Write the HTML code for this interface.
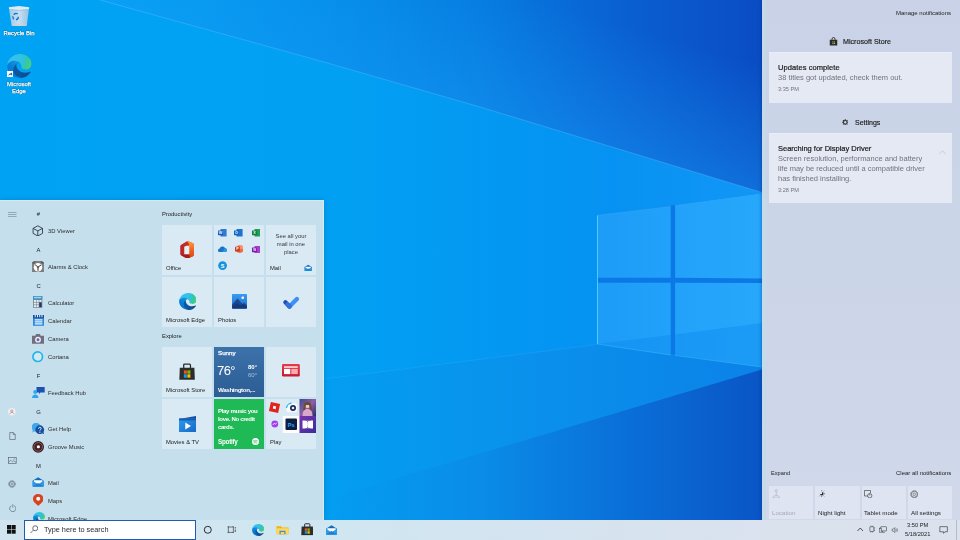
<!DOCTYPE html>
<html lang="en">
<head>
<meta charset="utf-8">
<title>Desktop</title>
<style>
html,body{margin:0;padding:0;}
body{width:960px;height:540px;overflow:hidden;position:relative;background:#0c8ff0;font-family:"Liberation Sans",sans-serif;color:#1b1b1b;-webkit-font-smoothing:antialiased;}
*{box-sizing:border-box;}
.abs{position:absolute;}
#wall{position:absolute;left:0;top:0;width:960px;height:540px;}
.t{position:absolute;white-space:nowrap;line-height:1;}
.t,.app,.hdr,.grp,.lbl,.dlabel{will-change:transform;}
/* desktop icons */
.dlabel{position:absolute;color:#fff;font-size:5.9px;text-align:center;line-height:7.2px;text-shadow:0 0.4px 1px rgba(0,0,0,.85),0 0 1.5px rgba(0,0,0,.55);-webkit-text-stroke:0.25px #fff;white-space:nowrap;}
/* start menu */
#start{position:absolute;left:0;top:200px;width:324.3px;height:320px;background:#c5dfec;box-shadow:0 0 5px rgba(0,70,150,0.32);border-right:0.6px solid #d4eaf5;}
#start .hdr{position:absolute;left:35.6px;width:5px;text-align:center;font-size:5.85px;color:#222;line-height:1;}
#start .app{position:absolute;left:48px;font-size:5.85px;color:#2e2e2e;line-height:1;white-space:nowrap;}
#start .grp{position:absolute;left:162px;font-size:5.85px;color:#222;line-height:1;}
.tile{position:absolute;width:50px;height:50px;background:#d9eaf4;overflow:hidden;}
.tile .lbl{position:absolute;left:4.2px;bottom:2.5px;font-size:5.85px;line-height:1;color:#1c1c1c;white-space:nowrap;}
/* action center */
#ac{position:absolute;left:762px;top:0;width:198px;height:520px;box-shadow:-1px 0 3px rgba(0,40,110,0.3);background:linear-gradient(#c9d2e6 0%,#cbd5e8 45%,#d0d8ea 100%);overflow:hidden;}
.card{position:absolute;left:6.9px;width:183px;background:#e5e9f4;border-top:0.6px solid #ebeefa;}
.qa{position:absolute;top:486.300px;width:44.600px;height:32.300px;background:#dee4f1;}
.qa .lbl{position:absolute;left:2.8px;bottom:2.6px;font-size:6.2px;line-height:1;white-space:nowrap;color:#1c1c1c;}
/* taskbar */
#tb{position:absolute;left:0;top:519.7px;width:960px;height:20.3px;background:linear-gradient(90deg,#d0e5f0 0%,#d0e6f0 36%,#d5e4f0 58%,#dae2ee 81%,#dbe2ee 100%);}
#search{position:absolute;left:24px;top:0.3px;width:171.6px;height:19.7px;background:#fff;border:0.8px solid #1f5cb0;}
</style>
</head>
<body>
<svg width="0" height="0" style="position:absolute">
<defs>
<linearGradient id="ea" x1="63" y1="180" x2="241" y2="180" gradientUnits="userSpaceOnUse"><stop offset="0" stop-color="#0c59a4"/><stop offset="1" stop-color="#114a8b"/></linearGradient>
<linearGradient id="ec" x1="157" y1="100" x2="46" y2="221" gradientUnits="userSpaceOnUse"><stop offset="0" stop-color="#1b9de2"/><stop offset="0.16" stop-color="#1595df"/><stop offset="0.67" stop-color="#0680d7"/><stop offset="1" stop-color="#0078d4"/></linearGradient>
<radialGradient id="ee" cx="26" cy="47" r="300" gradientUnits="userSpaceOnUse"><stop offset="0" stop-color="#35c1f1"/><stop offset="0.2" stop-color="#34c1ed"/><stop offset="0.45" stop-color="#2fc2df"/><stop offset="0.62" stop-color="#36c7a0"/><stop offset="0.8" stop-color="#50d668"/><stop offset="1" stop-color="#66eb6e"/></radialGradient>
<symbol id="edge" viewBox="2.8 14.9 243.2 239.1" preserveAspectRatio="none">
<path d="M231 190.500c-3.400 1.800-6.900 3.400-10.500 4.700-11.500 4.300-23.600 6.500-35.900 6.500-47.300 0-88.500-32.500-88.500-74.300 .1-11.400 6.400-21.900 16.400-27.300-42.800 1.800-53.800 46.400-53.800 72.500 0 73.900 68.100 81.400 82.800 81.400 7.900 0 19.800-2.300 27-4.600l1.300-.4c27.600-9.500 51.100-28.200 66.700-52.800 1.200-1.900 .5-4.300-1.300-5.500-1.300-.8-2.900-.9-4.200-.200z" fill="url(#ea)"/>
<path d="M105.700 241.400c-10.400-6.500-19.400-14.900-26.500-24.900-23.800-32.600-16.700-78.400 15.900-102.200 3.400-2.500 7-4.700 10.800-6.500 2.800-1.300 7.600-3.700 14-3.600 9.100 .1 17.700 4.400 23.100 11.700 3.600 4.900 5.600 10.700 5.700 16.800 0-.2 22-71.700-72.100-71.700-39.500 0-72.100 37.500-72.100 70.500-.2 17.400 3.600 34.700 10.900 50.400 24.700 52.700 85 78.600 140.200 60.200-18.900 6-39.500 3.300-56.300-7.200z" fill="url(#ec)"/>
<path d="M152.300 148.900c-.7 .9-3 2.300-3 5.100 0 2.400 1.500 4.600 4.300 6.500 13 9 37.500 7.800 37.600 7.800 9.600 0 19.100-2.600 27.400-7.500 17-9.900 27.400-28.100 27.400-47.700 .2-20.200-7.200-33.600-10.200-39.500-19.100-37.300-60.200-58.700-105-58.700-70 0-127 56.200-128 126.200 .4-33 33.200-59.600 72.200-59.600 3.200 0 21.200 .3 37.900 9.100 14.700 7.700 22.500 17.100 27.800 26.400 5.600 9.600 6.600 21.800 6.600 26.600s-2.500 12-7.100 18z" fill="url(#ee)"/>
</symbol>
<symbol id="bag" viewBox="0 0 24 24">
<path d="M7 7.500V2.800Q7 1.500 8.300 1.500h7.400Q17 1.500 17 2.800V7.500" fill="none" stroke="#2b2b2b" stroke-width="1.900"/>
<path d="M1.200 6.500h21.600l.7 17H.5z" fill="#2d2d2d"/>
<rect x="7.200" y="10.300" width="4.500" height="4.700" fill="#f25022"/><rect x="12.400" y="10.300" width="4.500" height="4.700" fill="#7fba00"/><rect x="7.200" y="15.800" width="4.500" height="4.700" fill="#00a4ef"/><rect x="12.400" y="15.800" width="4.500" height="4.700" fill="#ffb900"/>
</symbol>
<symbol id="mail" viewBox="0 0 24 24">
<path d="M1 9.500 12 2.500 23 9.500V21H1z" fill="#0f6cbd"/>
<path d="M3.500 8.500h17v8h-17z" fill="#fff"/>
<path d="M1 9.500 12 16.500 23 9.500V21H1z" fill="#2b9ae8"/>
<path d="M1 21 12 13.800 23 21z" fill="#1a82d6"/>
</symbol>
</defs>
</svg>
<!--WALL-->
<svg id="wall" viewBox="0 0 960 540">
<defs>
<linearGradient id="g1" x1="0" y1="0" x2="762" y2="0" gradientUnits="userSpaceOnUse"><stop offset="0" stop-color="#00a3f3"/><stop offset="0.45" stop-color="#02a0f3"/><stop offset="0.72" stop-color="#0495f2"/><stop offset="0.8" stop-color="#0692f2"/><stop offset="1" stop-color="#1296f6"/></linearGradient>
<linearGradient id="g2" x1="100" y1="0" x2="762" y2="0" gradientUnits="userSpaceOnUse"><stop offset="0" stop-color="#00a3f3"/><stop offset="0.34" stop-color="#038de9"/><stop offset="0.57" stop-color="#067ce0"/><stop offset="0.79" stop-color="#0a60d1"/><stop offset="1" stop-color="#0a4cc3"/></linearGradient>
<linearGradient id="g2b" x1="480" y1="107" x2="513" y2="-8" gradientUnits="userSpaceOnUse"><stop offset="0" stop-color="#189cf8" stop-opacity="0.4"/><stop offset="1" stop-color="#189cf8" stop-opacity="0"/></linearGradient>
<linearGradient id="g3" x1="324" y1="0" x2="762" y2="0" gradientUnits="userSpaceOnUse"><stop offset="0" stop-color="#039ef1"/><stop offset="0.5" stop-color="#0a90ec"/><stop offset="1" stop-color="#0b82e8"/></linearGradient>
<linearGradient id="g4" x1="324" y1="0" x2="762" y2="0" gradientUnits="userSpaceOnUse"><stop offset="0" stop-color="#039ef1"/><stop offset="0.36" stop-color="#0a8ce8"/><stop offset="0.68" stop-color="#0a70d9"/><stop offset="1" stop-color="#0a55c6"/></linearGradient>
<linearGradient id="gp" x1="596" y1="0" x2="762" y2="0" gradientUnits="userSpaceOnUse"><stop offset="0" stop-color="#1d9cf8"/><stop offset="1" stop-color="#27a8fb"/></linearGradient>
</defs>
<rect width="960" height="540" fill="url(#g1)"/>
<polygon points="100,0 324,62 480,107 762,192.5 762,0" fill="url(#g2)"/>
<polygon points="100,0 324,62 480,107 762,192.5 762,0" fill="url(#g2b)"/>
<polyline points="100,0 324,62 480,107 762,192.5" stroke="#5cc0ff" stroke-opacity="0.5" stroke-width="0.8" fill="none"/>
<polygon points="324,379 597,344.500 762,367.500 762,540 324,540" fill="url(#g3)"/>
<polyline points="324,379 597,344.500" stroke="#3cb4ff" stroke-opacity="0.35" stroke-width="0.8" fill="none"/>
<polygon points="324,500 762,369.500 762,540 324,540" fill="url(#g4)"/>
<polygon points="597.300,215.500 762,193.300 762,367 597.300,344" fill="#0b78e6"/>
<g fill="url(#gp)">
<polygon points="597.300,215.500 670.700,206.200 670.700,277.800 597.300,277.800"/>
<polygon points="675.100,204.900 762,193.300 762,278.500 675.100,277.800"/>
<polygon points="597.300,282.700 670.700,282.700 670.700,355 597.300,344"/>
<polygon points="675.100,282.700 762,283 762,367 675.100,355.500"/>
</g>
<g fill="#0a84ee" fill-opacity="0.35">
<polygon points="597.300,344 670.700,335 670.700,355"/>
<polygon points="675.100,334.500 762,323 762,367 675.100,355.500"/>
</g>
<polyline points="597.500,215.500 597.500,344" stroke="#4fd2ff" stroke-width="0.9" fill="none"/>
<polyline points="597.300,344 670.700,355 M675.100,355.500" stroke="#4cc4ff" stroke-opacity="0.55" stroke-width="0.7" fill="none"/>
<line x1="675.100" y1="355.500" x2="762" y2="367" stroke="#4cc4ff" stroke-opacity="0.45" stroke-width="0.7"/>
<polyline points="597.300,215.500 670.700,206.200 M675.100,204.900" stroke="#46b8ff" stroke-opacity="0.6" stroke-width="0.6" fill="none"/>
</svg>
<!--/WALL-->

<!--DESK-->
<svg class="abs" style="left:8px;top:4.500px" width="22" height="22.500" viewBox="0 0 44 45"><defs><linearGradient id="rb1" x1="0" y1="0" x2="1" y2="0"><stop offset="0" stop-color="#a9cde8"/><stop offset="0.5" stop-color="#d4e6f2"/><stop offset="1" stop-color="#9fc4e0"/></linearGradient></defs><path d="M2 7 42 7 37.500 42 7.500 42z" fill="url(#rb1)" opacity="0.930"/><path d="M1.500 4.500 22 2 42.500 4.500 42 8 22 10 2 8z" fill="#e4eef5" opacity="0.950"/><path d="M2 8 22 10 42 8 41.600 10 22 12 2.300 10z" fill="#9fbdd6" opacity="0.800"/><path d="M24 10v32" stroke="#c6d9e8" stroke-width="1" opacity="0.700"/><g fill="none" stroke="#1c6ec8" stroke-width="2.600"><path d="M11.500 19.500a5.500 5.500 0 0 1 8-1.500"/><path d="M20.500 23.500a5.500 5.500 0 0 1-4.500 6"/><path d="M12 28.500a5.500 5.500 0 0 1-2-6"/></g><path d="M9 42 36 42 37 38 8.500 38z" fill="#e8c8b8" opacity="0.450"/></svg>
<div class="dlabel" id="dl1" style="left:0;top:29.600px;width:38px;">Recycle Bin</div>
<svg class="abs" style="left:7.100px;top:53.800px" width="24.500" height="24"><use href="#edge"/></svg>
<svg class="abs" style="left:7.300px;top:71.300px" width="6" height="6" viewBox="0 0 12 12"><rect width="12" height="12" fill="#fff"/><path d="M3 10c0-4 2-5.500 5-5.500V2.500l3 3.500-3 3.500v-2C5.500 7.500 4 8 3 10z" fill="#1b5fc0"/></svg>
<div class="dlabel" id="dl2" style="left:0;top:80.500px;width:38px;">Microsoft<br>Edge</div>
<!--/DESK-->

<!--START-->
<div id="start">
<div class="abs" style="left:0;top:0;width:324px;height:0.600px;background:#d6e9f3;"></div>
<div class="hdr" id="r1" style="top:12.00px;">#</div>
<div class="app" id="r2" style="top:29.00px;">3D Viewer</div>
<div class="hdr" id="r3" style="top:48.00px;">A</div>
<div class="app" id="r4" style="top:65.00px;">Alarms &amp; Clock</div>
<div class="hdr" id="r5" style="top:84.00px;">C</div>
<div class="app" id="r6" style="top:101.00px;">Calculator</div>
<div class="app" id="r7" style="top:119.00px;">Calendar</div>
<div class="app" id="r8" style="top:137.00px;">Camera</div>
<div class="app" id="r9" style="top:155.00px;">Cortana</div>
<div class="hdr" id="r10" style="top:174.00px;">F</div>
<div class="app" id="r11" style="top:191.00px;">Feedback Hub</div>
<div class="hdr" id="r12" style="top:210.00px;">G</div>
<div class="app" id="r13" style="top:227.00px;">Get Help</div>
<div class="app" id="r14" style="top:245.00px;">Groove Music</div>
<div class="hdr" id="r15" style="top:264.00px;">M</div>
<div class="app" id="r16" style="top:281.00px;">Mail</div>
<div class="app" id="r17" style="top:299.00px;">Maps</div>
<div class="app" id="r18" style="top:317.00px;">Microsoft Edge</div>

<!-- left rail -->
<svg class="abs" style="left:8px;top:12px" width="8.500" height="5" viewBox="0 0 17 10"><path d="M0 1h17M0 5h17M0 9h17" stroke="#6b7c88" stroke-width="1.100"/></svg>
<svg class="abs" style="left:8.400px;top:208px" width="7.600" height="7.600" viewBox="0 0 16 16"><circle cx="8" cy="8" r="8" fill="#f3eeee"/><circle cx="8" cy="6.200" r="2.400" fill="none" stroke="#8a6f78" stroke-width="1.100"/><path d="M3.600 13c.5-2.600 2.300-3.800 4.400-3.800s3.900 1.200 4.400 3.800" fill="none" stroke="#8a6f78" stroke-width="1.100"/></svg>
<svg class="abs" style="left:8.700px;top:232px" width="7" height="8" viewBox="0 0 14 16"><path d="M1.500 1h7l4 4v10h-11z" fill="none" stroke="#4c5a64" stroke-width="1.200"/><path d="M8.500 1v4h4" fill="none" stroke="#4c5a64" stroke-width="1.200"/></svg>
<svg class="abs" style="left:8.200px;top:256.500px" width="8.600" height="7" viewBox="0 0 17 14"><rect x="0.700" y="0.700" width="15.600" height="12" fill="none" stroke="#4c5a64" stroke-width="1.200"/><path d="M1 10.500 5.500 6.500 9 9.500 11.500 7.500 16 11" fill="none" stroke="#4c5a64" stroke-width="1.100"/><circle cx="12" cy="4" r="1" fill="#4c5a64"/></svg>
<svg class="abs" style="left:8.300px;top:280px" width="8" height="8" viewBox="0 0 20 20"><circle cx="10" cy="10" r="8.200" fill="none" stroke="#4c5a64" stroke-width="1.700" stroke-dasharray="3.600 1.550"/><circle cx="10" cy="10" r="6.600" fill="none" stroke="#4c5a64" stroke-width="1.300"/><circle cx="10" cy="10" r="2.800" fill="none" stroke="#4c5a64" stroke-width="1.300"/></svg>
<svg class="abs" style="left:8.600px;top:304.200px" width="7.600" height="8" viewBox="0 0 15 16"><path d="M4.800 3.300a6.300 6.300 0 1 0 5.400 0" fill="none" stroke="#4c5a64" stroke-width="1.200"/><path d="M7.500 0.500v7" stroke="#4c5a64" stroke-width="1.200"/></svg>

<!-- app icons -->
<svg class="abs" style="left:32px;top:24.500px" width="11.600" height="11.800" viewBox="0 0 24 24"><path d="M12 1.500 21.800 6.800v10.400L12 22.500 2.200 17.200V6.800z M2.200 6.800 12 12l9.800-5.200M12 12v10.500" fill="none" stroke="#1f2d3a" stroke-width="1.700" stroke-linejoin="round"/></svg>
<svg class="abs" style="left:32px;top:60.800px" width="12" height="11.400" viewBox="0 0 24 23"><path d="M0 3 5 0h14l5 3v20H0z" fill="#7d7d7d"/><path d="M0 3 5 0 7 2.500 2 6z M24 3 19 0 17 2.500 22 6z" fill="#5e5e5e"/><circle cx="12" cy="12.500" r="8.600" fill="#fbfbfb"/><path d="M12 12.500 7 8M12 12.500 17.500 8.500M12 12.500V19" stroke="#222" stroke-width="1.900" fill="none" stroke-linecap="round"/></svg>
<svg class="abs" style="left:33.300px;top:96.300px" width="9.300" height="11.800" viewBox="0 0 18.600 23.600"><rect width="18.600" height="23.600" fill="#74838e"/><rect width="18.600" height="6.500" fill="#3595cf"/><rect x="2" y="1.600" width="14.600" height="3" fill="#9ad4f0"/><g fill="#e6edf2"><rect x="1.600" y="8" width="4.400" height="3.800"/><rect x="7.100" y="8" width="4.400" height="3.800"/><rect x="12.600" y="8" width="4.400" height="3.800"/><rect x="1.600" y="13.200" width="4.400" height="3.800"/><rect x="7.100" y="13.200" width="4.400" height="3.800"/><rect x="1.600" y="18.400" width="4.400" height="3.800"/><rect x="7.100" y="18.400" width="4.400" height="3.800"/></g><rect x="12.600" y="13.200" width="4.400" height="9" fill="#1d3566"/></svg>
<svg class="abs" style="left:32.500px;top:115px" width="11.200" height="10.800" viewBox="0 0 22.400 21.600"><rect width="22.400" height="21.600" fill="#2a8be0"/><rect width="22.400" height="6.500" fill="#164fa0"/><g fill="#fff"><rect x="3.500" y="0" width="1.800" height="4.500"/><rect x="8" y="0" width="1.800" height="4.500"/><rect x="12.600" y="0" width="1.800" height="4.500"/><rect x="17.100" y="0" width="1.800" height="4.500"/><rect x="3.600" y="8.600" width="15.200" height="2.300"/><rect x="3.600" y="12.600" width="15.200" height="2.300"/><rect x="3.600" y="16.600" width="15.200" height="2.300"/></g></svg>
<svg class="abs" style="left:32px;top:134px" width="12" height="9.800" viewBox="0 0 24 19.600"><path d="M0 3.600h6.500L8.500 0h7l2 3.600H24v16H0z" fill="#6f707c"/><circle cx="12" cy="11.300" r="5.800" fill="#f1eef8"/><circle cx="12" cy="11.300" r="3" fill="#6e62c4"/></svg>
<svg class="abs" style="left:32.300px;top:151.300px" width="11.400" height="11.400" viewBox="0 0 22.800 22.800"><circle cx="11.400" cy="11.400" r="9.600" fill="#d3e9f4" stroke="#22b5ea" stroke-width="3.400"/></svg>
<svg class="abs" style="left:32px;top:186.700px" width="12.700" height="11.400" viewBox="0 0 25.400 22.800"><path d="M9 0h16.400v11H17l-3 3v-3H9z" fill="#1d52b0"/><circle cx="6.500" cy="9.800" r="3.900" fill="#2aa6f4"/><path d="M0 22.800c0-5.500 2.800-8 6.500-8s6.500 2.500 6.500 8z" fill="#2aa6f4"/></svg>
<svg class="abs" style="left:32px;top:222.500px" width="12.500" height="11.600" viewBox="0 0 25 23.200"><path d="M9 0a8.500 8.500 0 0 1 8.500 8.500A8.500 8.500 0 0 1 9 17H3l-3 2.500 1.800-5A8.500 8.500 0 0 1 9 0z" fill="#3fa6ee"/><circle cx="15.500" cy="13.500" r="8.800" fill="#134f9e"/><path d="M20 20l4.500 3-1.500-5z" fill="#134f9e"/><path d="M13 11.300c0-1.700 1.200-2.700 2.700-2.700s2.600 1 2.600 2.300c0 2-2.500 2.200-2.500 4.300" fill="none" stroke="#fff" stroke-width="1.800"/><circle cx="15.800" cy="18.300" r="1.200" fill="#fff"/></svg>
<svg class="abs" style="left:32px;top:240.800px" width="12.400" height="11.800" viewBox="0 0 24.800 23.600"><circle cx="12.400" cy="11.800" r="11.600" fill="#2e2226"/><circle cx="12.400" cy="11.800" r="8.600" fill="none" stroke="#c65a58" stroke-width="1.700"/><circle cx="12.400" cy="11.800" r="5.500" fill="#4a2a30"/><circle cx="12.800" cy="11.600" r="3.100" fill="#fff"/></svg>
<svg class="abs" style="left:32px;top:276.400px" width="12.300" height="12"><use href="#mail"/></svg>
<svg class="abs" style="left:32.900px;top:294.300px" width="10.500" height="11.800" viewBox="0 0 21 23.600"><path d="M10.500 0C16 0 21 3.800 21 9.800c0 5.700-6 9.700-10.500 13.800C6 19.500 0 15.500 0 9.800 0 3.800 5 0 10.500 0z" fill="#d9421f"/><circle cx="10.500" cy="9.500" r="4" fill="#fff"/></svg>
<svg class="abs" style="left:32.500px;top:312.200px" width="12" height="11.800"><use href="#edge"/></svg>
<div class="grp" id="gp1" style="top:12px;">Productivity</div>
<div class="grp" id="gp2" style="top:134px;">Explore</div>
<div class="tile" style="left:162px;top:24.5px;"><svg class="abs" style="left:17.900px;top:16px" width="14" height="17.600" viewBox="0 0 28 35"><defs><linearGradient id="of1" x1="0" y1="0" x2="0" y2="1"><stop offset="0" stop-color="#ffa040"/><stop offset="0.5" stop-color="#f4621c"/><stop offset="1" stop-color="#e0400f"/></linearGradient><linearGradient id="of2" x1="0" y1="0" x2="1" y2="0"><stop offset="0" stop-color="#b8232a"/><stop offset="1" stop-color="#d43a1a"/></linearGradient></defs><path d="M16.500 0.500 26 4.500Q27.500 5.200 27.500 7V28Q27.500 30 26 30.600L16 34.500Q14 35.200 12 34L2 28.500Q0.500 27.600 0.500 26V10.500Q0.500 8.500 2.500 7.500L13 1Q14.800 0 16.500 0.500Z" fill="url(#of2)"/><path d="M16.500 0.500 26 4.500Q27.500 5.200 27.500 7V28Q27.500 30 26 30.600L16 34.500Q15 34.800 14 34.800L18 30V6L14.500 0.300Q15.500 0.200 16.500 0.500Z" fill="url(#of1)"/><path d="M2 28.500 12 34Q14 35.200 16 34.500L20 33 18.500 26.500 8.500 26.500Z" fill="#a41e1c"/><path d="M8.500 11.500 13 9.500H18.500V26.500H8.500Z" fill="#e4f0f7"/></svg><div class="lbl" style="">Office</div></div>
<div class="tile" style="left:214px;top:24.5px;"><svg class="abs" style="left:4.0px;top:4.7px" width="8.600" height="7.600" viewBox="0 0 17.200 15.200"><rect x="5" y="0" width="12.200" height="15.200" rx="1.200" fill="#2b7cd3"/><rect x="0" y="3" width="10" height="9.400" rx="1" fill="#185abd"/><text x="5" y="10.600" font-size="7.500" font-weight="bold" fill="#fff" text-anchor="middle" font-family="Liberation Sans, sans-serif">W</text></svg><svg class="abs" style="left:20.3px;top:4.7px" width="8.600" height="7.600" viewBox="0 0 17.200 15.200"><rect x="5" y="0" width="12.200" height="15.200" rx="1.200" fill="#1a74d0"/><rect x="0" y="3" width="10" height="9.400" rx="1" fill="#0f5fbe"/><text x="5" y="10.600" font-size="7.500" font-weight="bold" fill="#fff" text-anchor="middle" font-family="Liberation Sans, sans-serif">O</text></svg><svg class="abs" style="left:37.7px;top:4.7px" width="8.600" height="7.600" viewBox="0 0 17.200 15.200"><rect x="5" y="0" width="12.200" height="15.200" rx="1.200" fill="#1f9e5a"/><rect x="0" y="3" width="10" height="9.400" rx="1" fill="#107c41"/><text x="5" y="10.600" font-size="7.500" font-weight="bold" fill="#fff" text-anchor="middle" font-family="Liberation Sans, sans-serif">X</text></svg><svg class="abs" style="left:4px;top:21.500px" width="9.200" height="6.400" viewBox="0 0 18.400 12.800"><path d="M4 12.800a4 4 0 0 1-.6-7.950A5.800 5.800 0 0 1 14 3.800a4.600 4.600 0 0 1 .2 9z" fill="#1a74c8"/><path d="M8 12.800 14 3.800a4.600 4.600 0 0 1 .2 9z" fill="#2b95e8"/></svg><svg class="abs" style="left:20.800px;top:20.500px" width="8.600" height="8.200" viewBox="0 0 17.200 16.400"><circle cx="9.500" cy="8.200" r="7.700" fill="#ed6c47"/><path d="M9.500 0.500a7.700 7.700 0 0 1 7.700 7.700H9.500z" fill="#ff8f6b"/><rect x="0" y="3.500" width="9.500" height="9.400" rx="1" fill="#c43e1c"/><text x="4.800" y="10.900" font-size="7.500" font-weight="bold" fill="#fff" text-anchor="middle" font-family="Liberation Sans, sans-serif">P</text></svg><svg class="abs" style="left:37.5px;top:21.3px" width="8.600" height="7.600" viewBox="0 0 17.200 15.200"><rect x="5" y="0" width="12.200" height="15.200" rx="1.200" fill="#a840cc"/><rect x="0" y="3" width="10" height="9.400" rx="1" fill="#7719aa"/><text x="5" y="10.600" font-size="7.500" font-weight="bold" fill="#fff" text-anchor="middle" font-family="Liberation Sans, sans-serif">N</text></svg><svg class="abs" style="left:4px;top:36.700px" width="9.200" height="9.200" viewBox="0 0 18.400 18.400"><circle cx="9.200" cy="9.200" r="8.800" fill="#1792dc"/><text x="9.200" y="13.200" font-size="11" font-weight="bold" fill="#fff" text-anchor="middle" font-family="Liberation Sans, sans-serif">S</text></svg></div>
<div class="tile" style="left:266px;top:24.5px;"><div class="t" id="mt1" style="left:0;width:50px;top:7.500px;font-size:5.850px;line-height:8px;text-align:center;white-space:normal;color:#3a3a3a;">See all your<br>mail in one<br>place</div><svg class="abs" style="left:38.300px;top:39px" width="8.400" height="7.800"><use href="#mail"/></svg><div class="lbl" style="">Mail</div></div>
<div class="tile" style="left:162px;top:76.5px;"><svg class="abs" style="left:16.600px;top:16.100px" width="17.700" height="17"><use href="#edge"/></svg><div class="lbl" style="">Microsoft Edge</div></div>
<div class="tile" style="left:214px;top:76.5px;"><svg class="abs" style="left:17.600px;top:17.600px" width="15" height="14.500" viewBox="0 0 30 29"><defs><linearGradient id="ph1" x1="0" y1="0" x2="0" y2="1"><stop offset="0" stop-color="#3a9af0"/><stop offset="1" stop-color="#1f6fd0"/></linearGradient></defs><rect width="30" height="29" rx="1.500" fill="url(#ph1)"/><circle cx="21.500" cy="7.500" r="2.600" fill="#fff"/><path d="M0 21 11 9l10 11 3-3 6 6v4.500a1.500 1.500 0 0 1-1.500 1.500H1.500A1.500 1.500 0 0 1 0 27.500z" fill="#1b4890"/><path d="M0 25l9-7 8 5 5-3 8 5v2.500a1.500 1.500 0 0 1-1.500 1.500H1.500A1.500 1.500 0 0 1 0 27.500z" fill="#143a7c"/></svg><div class="lbl" style="">Photos</div></div>
<div class="tile" style="left:266px;top:76.5px;"><svg class="abs" style="left:0;top:0" width="50" height="50" viewBox="0 0 50 50"><path d="M23.500 29.400 30.900 22" stroke="#3d90f2" stroke-width="4.300" stroke-linecap="round"/><path d="M19.400 25.300 23.500 29.400" stroke="#2349b2" stroke-width="4.300" stroke-linecap="round"/><path d="M21.500 27.400 23.500 29.400" stroke="#3272dc" stroke-width="4.300" stroke-linecap="round"/></svg></div>
<div class="tile" style="left:162px;top:146.5px;"><svg class="abs" style="left:16.600px;top:16px" width="16.200" height="17.200" viewBox="0 0 24 24" preserveAspectRatio="none"><use href="#bag"/></svg><div class="lbl" style="">Microsoft Store</div></div>
<div class="tile" style="left:214px;top:146.5px;background:linear-gradient(#3c72aa,#2c5c94);"><div class="t" id="w1" style="left:3.700px;top:3px;font-size:6.200px;color:#fff;-webkit-text-stroke:0.25px #fff;">Sunny</div><div class="t" id="w2" style="left:3.300px;top:17.500px;font-size:13px;color:#fff;letter-spacing:-0.600px;">76°</div><div class="t" id="w3" style="left:33.800px;top:17px;font-size:6px;color:#fff;font-weight:bold;">80°</div><div class="t" id="w4" style="left:33.800px;top:25px;font-size:6px;color:#a9c0da;">60°</div><div class="t" id="w5" style="left:3.700px;top:40px;font-size:6.200px;color:#fff;font-weight:bold;letter-spacing:-0.350px;">Washington,...</div></div>
<div class="tile" style="left:266px;top:146.5px;"><svg class="abs" style="left:16.400px;top:17.800px" width="17.800" height="12.600" viewBox="0 0 35.600 25.200"><defs><linearGradient id="nw1" x1="0" y1="0" x2="0" y2="1"><stop offset="0" stop-color="#e83a48"/><stop offset="1" stop-color="#c8182e"/></linearGradient></defs><rect width="35.600" height="25.200" rx="2.500" fill="url(#nw1)"/><rect x="4" y="4.500" width="27.600" height="3.200" fill="#fde4e6"/><rect x="4" y="9.700" width="12.600" height="10.500" fill="#fff"/><rect x="18.600" y="9.700" width="13" height="10.500" fill="#f9aab2"/></svg></div>
<div class="tile" style="left:162px;top:198.5px;"><svg class="abs" style="left:16.600px;top:17.500px" width="17" height="16.200" viewBox="0 0 34 32.400"><defs><linearGradient id="mv1" x1="0" y1="0" x2="1" y2="1"><stop offset="0" stop-color="#2a9df0"/><stop offset="1" stop-color="#1668c4"/></linearGradient></defs><path d="M0 6 34 0v6z" fill="#0f4fa0"/><rect y="5" width="34" height="27.400" rx="1.500" fill="url(#mv1)"/><path d="M0 5h34v4H0z" fill="#1a5cb0"/><path d="M12.500 13v14l11.500-7z" fill="#fff"/></svg><div class="lbl" style="">Movies &amp; TV</div></div>
<div class="tile" style="left:214px;top:198.5px;background:#1fba55;"><div class="t" id="sp1" style="left:3.700px;top:8px;font-size:6.100px;line-height:8.100px;color:#fff;white-space:normal;width:46px;font-weight:bold;letter-spacing:-0.350px;">Play music you love. No credit cards.</div><div class="t" id="sp2" style="left:3.700px;top:40px;font-size:6.300px;color:#fff;font-weight:bold;letter-spacing:-0.250px;">Spotify</div><svg class="abs" style="left:38.400px;top:39.400px" width="7" height="7" viewBox="0 0 14 14"><circle cx="7" cy="7" r="7" fill="#fff"/><path d="M3.200 5c2.600-.8 5.400-.5 7.600.7M3.700 7.300c2.200-.6 4.400-.3 6.200.7M4.200 9.500c1.700-.4 3.300-.2 4.700.6" fill="none" stroke="#1fb954" stroke-width="1.200" stroke-linecap="round"/></svg></div>
<div class="tile" style="left:266px;top:198.5px;"><svg class="abs" style="left:0;top:0" width="50" height="34" viewBox="0 0 50 34"><defs><linearGradient id="gl1" x1="0" y1="0" x2="1" y2="1"><stop offset="0" stop-color="#3b4b8c"/><stop offset="0.5" stop-color="#8d5fa6"/><stop offset="1" stop-color="#2c2d68"/></linearGradient><linearGradient id="db1" x1="0" y1="0" x2="1" y2="1"><stop offset="0" stop-color="#7a35b0"/><stop offset="1" stop-color="#3a2c98"/></linearGradient></defs>
<rect x="3.800" y="3.800" width="9.400" height="9.400" fill="#e2231a" transform="rotate(12 8.500 8.500)"/><rect x="7.100" y="7.100" width="2.800" height="2.800" fill="#fff" transform="rotate(12 8.500 8.500)"/>
<rect x="20.500" y="4.300" width="10.800" height="9" rx="2.500" fill="#f6fafd"/><path d="M20.500 9a5 5 0 0 1 5-4.700" fill="none" stroke="#2bb8e8" stroke-width="1.400"/><circle cx="27" cy="9" r="3" fill="#1a2a50"/><circle cx="27" cy="9" r="1.300" fill="#e8eef8"/>
<rect x="33.500" y="0" width="16.500" height="17" fill="url(#gl1)"/><circle cx="41.500" cy="6" r="3" fill="#f0c8c0"/><path d="M36.500 17c0-5 2-7 5-7s5 2 5 7z" fill="#d9a8c8"/><path d="M38 5c0-3 7-3 7 0l1 6h-2l-1-5h-3l-1 5h-2z" fill="#6a4a3a"/>
<circle cx="8.800" cy="25" r="3.400" fill="#a040f0"/><path d="M6.800 26l1.500-1.800 1 1 1.500-1.200" fill="none" stroke="#fff" stroke-width="0.800"/>
<rect x="16.800" y="17" width="16.700" height="17" fill="#fdfdfd"/><rect x="19.500" y="19.600" width="11.500" height="11.500" rx="1" fill="#0b2040"/><text x="25.200" y="27.600" font-size="5.500" fill="#35a8ff" text-anchor="middle" font-family="Liberation Sans, sans-serif" font-weight="bold">Ps</text>
<rect x="33.500" y="17" width="16.500" height="17" fill="url(#db1)"/><path d="M36.500 21.500h1.800a4 4 0 0 1 0 8h-1.800z M47 21.500h-1.800a4 4 0 0 0 0 8H47z" fill="#fff"/><path d="M40.300 21.500h.7a4 4 0 0 1 0 8h-.7a6 6 0 0 0 0-8z M43.200 21.500h-.7a4 4 0 0 0 0 8h.7a6 6 0 0 1 0-8z" fill="#fff" opacity="0.900"/>
</svg><div class="lbl" style="">Play</div></div>
</div>
<!--/START-->

<!--AC-->
<div id="ac">
<div class="abs" style="left:-0.200px;top:0;width:4.200px;height:520px;background:linear-gradient(90deg,#c2d8f5 0%,#c4daf2 40%,#c4dce4 55%,#c8d9e6 100%);opacity:0.85;"></div>
<div class="t" id="mn" style="left:134px;top:10px;font-size:6px;color:#222;">Manage notifications</div>
<svg class="abs" style="left:66.5px;top:36.5px;" width="9" height="9" viewBox="0 0 18 18"><path d="M6 5.5V4a3 3 0 0 1 6 0v1.500" fill="none" stroke="#2a2a2a" stroke-width="1.8"/><rect x="1.5" y="5.500" width="15" height="11.500" fill="#2b2b2b"/><rect x="6.200" y="8.500" width="2.500" height="2.500" fill="#d9532c"/><rect x="9.300" y="8.500" width="2.500" height="2.500" fill="#7fba00"/><rect x="6.200" y="11.600" width="2.500" height="2.500" fill="#00a4ef"/><rect x="9.300" y="11.600" width="2.500" height="2.500" fill="#ffb900"/></svg>
<div class="t" id="ms" style="left:81.300px;top:39.200px;font-size:7.15px;color:#1a1a1a;-webkit-text-stroke:0.15px #1a1a1a;">Microsoft Store</div>
<div class="card" style="top:52px;height:50.500px;"></div>
<div class="t" id="n1t" style="left:16.300px;top:64px;font-size:7.5px;letter-spacing:0.08px;color:#1a1a1a;-webkit-text-stroke:0.2px #1a1a1a;">Updates complete</div>
<div class="t" id="n1b" style="left:16.300px;top:74px;font-size:7.5px;color:#70747c;">38 titles got updated, check them out.</div>
<div class="t" id="n1d" style="left:16.300px;top:87.300px;font-size:5.6px;color:#70747c;">3:35 PM</div>

<svg class="abs" style="left:79.500px;top:118.500px;" width="6.500" height="6.500" viewBox="0 0 20 20"><circle cx="10" cy="10" r="5.500" fill="none" stroke="#222" stroke-width="3"/><g stroke="#222" stroke-width="3.200"><line x1="10" y1="0.500" x2="10" y2="4"/><line x1="10" y1="16" x2="10" y2="19.500"/><line x1="0.500" y1="10" x2="4" y2="10"/><line x1="16" y1="10" x2="19.500" y2="10"/><line x1="3.300" y1="3.300" x2="5.800" y2="5.800"/><line x1="14.200" y1="14.200" x2="16.700" y2="16.700"/><line x1="3.300" y1="16.700" x2="5.800" y2="14.200"/><line x1="14.200" y1="5.800" x2="16.700" y2="3.300"/></g></svg>
<div class="t" id="st" style="left:92.800px;top:119px;font-size:7px;color:#1a1a1a;-webkit-text-stroke:0.15px #1a1a1a;">Settings</div>
<div class="card" style="top:133px;height:70.300px;"></div>
<div class="t" id="n2t" style="left:16.300px;top:144.800px;font-size:7.5px;letter-spacing:0;color:#1a1a1a;-webkit-text-stroke:0.2px #1a1a1a;">Searching for Display Driver</div>
<div class="t" id="n2a" style="left:16.300px;top:155px;font-size:7.5px;color:#70747c;">Screen resolution, performance and battery</div>
<div class="t" id="n2b" style="left:16.300px;top:164.800px;font-size:7.5px;color:#70747c;">life may be reduced until a compatible driver</div>
<div class="t" id="n2c" style="left:16.300px;top:174.800px;font-size:7.5px;color:#70747c;">has finished installing.</div>
<div class="t" id="n2d" style="left:16.300px;top:188px;font-size:5.6px;color:#70747c;">3:28 PM</div>
<svg class="abs" style="left:176.500px;top:150px;" width="7" height="4.500" viewBox="0 0 14 9"><polyline points="1,8 7,1.500 13,8" fill="none" stroke="#b9bfd0" stroke-width="1.400"/></svg>

<div class="t" id="ex" style="left:8.600px;top:471px;font-size:5.65px;color:#222;">Expand</div>
<div class="t" id="ca" style="left:134px;top:470px;font-size:6px;color:#222;">Clear all notifications</div>
<div class="qa" style="left:6.800px;"><svg class="abs" style="left:2.800px;top:2.500px" width="8.500" height="9.500" viewBox="0 0 17 19"><circle cx="8.500" cy="3.500" r="2.200" fill="none" stroke="#a9afbf" stroke-width="1.200"/><path d="M8.500 6v7M4.500 13.500 1.500 18h14l-3-4.500z" fill="none" stroke="#a9afbf" stroke-width="1.200"/></svg><div class="lbl" id="q1" style="color:#a3a9b8;">Location</div></div>
<div class="qa" style="left:53.300px;"><svg class="abs" style="left:3px;top:3.500px" width="7" height="7" viewBox="0 0 14 14"><circle cx="7.500" cy="7.500" r="3.600" fill="#222"/><circle cx="5.800" cy="5.800" r="2.600" fill="#dee4f1"/><path d="M7.500 0.500v2M12.500 2.500l-1.400 1.400M14 7.500h-2M12.500 12.500l-1.400-1.400M7.500 14v-2M2.500 12.500l1.400-1.400" stroke="#222" stroke-width="1.100"/></svg><div class="lbl" id="q2">Night light</div></div>
<div class="qa" style="left:99.600px;"><svg class="abs" style="left:2.600px;top:3.500px" width="8.500" height="8.500" viewBox="0 0 17 17"><path d="M8 12H1V1h12v5" fill="none" stroke="#333" stroke-width="1.200"/><circle cx="11.500" cy="11.500" r="4.300" fill="none" stroke="#333" stroke-width="1.200"/><path d="M11.500 7v4" stroke="#333" stroke-width="1.100"/></svg><div class="lbl" id="q3">Tablet mode</div></div>
<div class="qa" style="left:145.900px;"><svg class="abs" style="left:1.700px;top:3.500px" width="8.600" height="8.600" viewBox="0 0 20 20"><circle cx="10" cy="10" r="8.300" fill="none" stroke="#444" stroke-width="1.500" stroke-dasharray="3.200 1.140"/><circle cx="10" cy="10" r="7" fill="none" stroke="#444" stroke-width="1.200"/><circle cx="10" cy="10" r="3" fill="none" stroke="#444" stroke-width="1.200"/></svg><div class="lbl" id="q4">All settings</div></div>
</div>
<!--/AC-->

<!--TB-->
<div id="tb">
<svg class="abs" style="left:7.300px;top:5.700px" width="8.700" height="8.700" viewBox="0 0 17.400 17.400"><g fill="#111"><rect x="0" y="0" width="8.200" height="8.200"/><rect x="9.200" y="0" width="8.200" height="8.200"/><rect x="0" y="9.200" width="8.200" height="8.200"/><rect x="9.200" y="9.200" width="8.200" height="8.200"/></g></svg>
<div id="search"></div>
<svg class="abs" style="left:29.500px;top:5.500px" width="8.500" height="8.500" viewBox="0 0 17 17"><circle cx="10.500" cy="6.500" r="5" fill="none" stroke="#222" stroke-width="1.300"/><line x1="6.800" y1="10.200" x2="1" y2="16" stroke="#222" stroke-width="1.300"/></svg>
<div class="t" id="ph" style="left:44px;top:6.400px;font-size:7.300px;color:#2a2a2a;">Type here to search</div>
<svg class="abs" style="left:203px;top:5.300px" width="9.600" height="9.600" viewBox="0 0 9.600 9.600"><circle cx="4.800" cy="4.800" r="3.500" fill="none" stroke="#2a2a2a" stroke-width="1"/></svg>
<svg class="abs" style="left:227px;top:6px" width="10" height="8" viewBox="0 0 20 16"><rect x="2.500" y="2" width="10" height="10.500" fill="none" stroke="#444" stroke-width="1.400"/><path d="M1 1.500h3M1 13h3M11 1.500h3M11 13h3" stroke="#444" stroke-width="1.300"/><path d="M16.500 2v3M16.500 7v5" stroke="#333" stroke-width="1.600"/></svg>
<svg class="abs" style="left:251.700px;top:4.300px" width="12.300" height="12"><use href="#edge"/></svg>
<svg class="abs" style="left:275.500px;top:5px" width="13" height="10" viewBox="0 0 26 20"><path d="M1 2.500h9l2 2.500h13v13.500H1z" fill="#f4b400"/><path d="M1 6.500h24v12H1z" fill="#ffd75e"/><path d="M7 11.500h12v7H7z" fill="#3d8fe0"/><path d="M9.500 14h7v4.500h-7z" fill="#ffd75e"/></svg>
<svg class="abs" style="left:300.500px;top:3.500px" width="12.500" height="12.500"><use href="#bag"/></svg>
<svg class="abs" style="left:324.500px;top:4px" width="13" height="12"><use href="#mail"/></svg>

<svg class="abs" style="left:856.500px;top:7.500px" width="6.500" height="4.500" viewBox="0 0 13 9"><polyline points="1,8 6.500,2 12,8" fill="none" stroke="#222" stroke-width="1.500"/></svg>
<svg class="abs" style="left:868.600px;top:5.800px" width="6.800" height="8.200" viewBox="0 0 16 18"><rect x="2" y="3.500" width="9.500" height="11" rx="1" fill="none" stroke="#333" stroke-width="1.300"/><path d="M11.500 7 15 5v8l-3.500-2" fill="none" stroke="#333" stroke-width="1.200"/><path d="M4.500 1v2.500M8.500 1v2.500M4.500 14.500V17M8.500 14.500V17" stroke="#333" stroke-width="1.200"/></svg>
<svg class="abs" style="left:879px;top:6.800px" width="8.400" height="7" viewBox="0 0 19 17"><rect x="4" y="2" width="14" height="10" fill="none" stroke="#333" stroke-width="1.300"/><path d="M1 4.500h3M8 12v3M5 15.300h9" stroke="#333" stroke-width="1.300" fill="none"/><rect x="0.500" y="6" width="4" height="9" fill="#dbe2ee" stroke="#333" stroke-width="1.100"/></svg>
<svg class="abs" style="left:891.300px;top:6.900px" width="8" height="6.200" viewBox="0 0 18 16"><path d="M1.500 5.500h3l4-4v13l-4-4h-3z" fill="none" stroke="#333" stroke-width="1.300"/><path d="M11 5c1.300 1.800 1.300 4.200 0 6M13.500 3c2.300 3 2.300 7 0 10" fill="none" stroke="#333" stroke-width="1.200"/></svg>
<div class="t" id="tm" style="left:907.200px;top:3.200px;font-size:5.700px;color:#1a1a1a;">3:50 PM</div>
<div class="t" id="dt" style="left:905px;top:12px;font-size:5.700px;color:#1a1a1a;">5/18/2021</div>
<svg class="abs" style="left:939px;top:6px" width="9.200" height="8" viewBox="0 0 20 18"><path d="M1.500 1.500h17v11.500h-5.500l-3 3.500v-3.500h-8.500z" fill="none" stroke="#222" stroke-width="1.300"/></svg>
<div class="abs" style="left:956px;top:0;width:0.600px;height:20px;background:#b4bcc8;"></div>
</div>
<!--/TB-->
</body>
</html>
